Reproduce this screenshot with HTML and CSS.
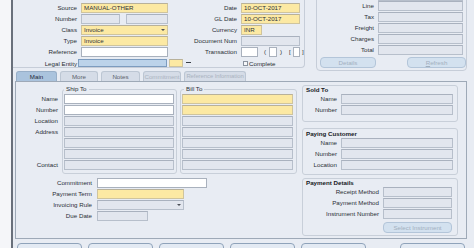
FILE: index.html
```html
<!DOCTYPE html>
<html>
<head>
<meta charset="utf-8">
<link rel="stylesheet" href="styles.css">
</head>
<body>
<div class="page">
  <div class="gutter"></div>
  <div class="window">
    <div class="top">
      <div class="trx">
        <div class="gtitle trx-title">Transaction</div>
        <div class="trx-body">
          <div class="colA">
            <div class="row"><span class="lbl la">Source</span><span class="f y wA">MANUAL-OTHER</span></div>
            <div class="row"><span class="lbl la">Number</span><span class="f wN1"></span><span class="f wN2"></span></div>
            <div class="row"><span class="lbl la">Class</span><span class="f y wA dd">Invoice<i class="arrow"></i></span></div>
            <div class="row"><span class="lbl la">Type</span><span class="f y wA">Invoice</span></div>
            <div class="row"><span class="lbl la">Reference</span><span class="f w wA"></span></div>
            <div class="row legal"><span class="lbl la lal">Legal Entity</span><span class="f b wLE"></span><span class="f y wLE2"></span><span class="lov"></span></div>
          </div>
          <div class="colB">
            <div class="row"><span class="lbl lb">Date</span><span class="f y wD">10-OCT-2017</span></div>
            <div class="row"><span class="lbl lb">GL Date</span><span class="f y wD">10-OCT-2017</span></div>
            <div class="row"><span class="lbl lb">Currency</span><span class="f y wC">INR</span></div>
            <div class="row"><span class="lbl lb">Document Num</span><span class="f wD"></span></div>
            <div class="row"><span class="lbl lb">Transaction</span><span class="f w wT1"></span><span class="par p1">(</span><span class="f w wT2"></span><span class="par p2">)</span><span class="par p3">[</span><span class="f w wT3"></span><span class="par p4">]</span></div>
            <div class="row chkrow"><span class="chk"></span><span class="chklbl">Complete</span></div>
          </div>
        </div>
      </div>
      <div class="bal">
        <div class="bal-title"><span class="gtitle">Balance Due</span><span class="f wB baltop"></span></div>
        <div class="row"><span class="lbl lc">Line</span><span class="f wB"></span></div>
        <div class="row"><span class="lbl lc">Tax</span><span class="f wB"></span></div>
        <div class="row"><span class="lbl lc">Freight</span><span class="f wB"></span></div>
        <div class="row"><span class="lbl lc">Charges</span><span class="f wB"></span></div>
        <div class="row"><span class="lbl lc">Total</span><span class="f wB"></span></div>
        <div class="balbtns"><span class="btn dis bDet">Details</span><span class="btn dis bRef"><u>R</u>efresh</span></div>
      </div>
    </div>
    <div class="tabs">
      <span class="tab sel t1">Main</span>
      <span class="tab t2">More</span>
      <span class="tab t3">Notes</span>
      <span class="tab dis t4">Commitment</span>
      <span class="tab dis t5">Reference Information</span>
    </div>
    <div class="panel">
      <div class="pleft">
        <div class="addr">
          <div class="addrLabels">
            <span class="lbl lr">Name</span>
            <span class="lbl lr">Number</span>
            <span class="lbl lr">Location</span>
            <span class="lbl lr">Address</span>
            <span class="lbl lr"></span>
            <span class="lbl lr"></span>
            <span class="lbl lr">Contact</span>
          </div>
          <fieldset class="fs ship">
            <legend>Ship To</legend>
            <span class="f w wS"></span>
            <span class="f w wS"></span>
            <span class="f wS"></span>
            <span class="f wS"></span>
            <span class="f wS"></span>
            <span class="f wS"></span>
            <span class="f wS"></span>
          </fieldset>
          <fieldset class="fs bill">
            <legend>Bill To</legend>
            <span class="f y wBi"></span>
            <span class="f y wBi"></span>
            <span class="f wBi"></span>
            <span class="f wBi"></span>
            <span class="f wBi"></span>
            <span class="f wBi"></span>
            <span class="f wBi"></span>
          </fieldset>
        </div>
        <div class="commit">
          <div class="row"><span class="lbl lm">Commitment</span><span class="f w wCm"></span></div>
          <div class="row"><span class="lbl lm">Payment Term</span><span class="f y wPt"></span></div>
          <div class="row"><span class="lbl lm">Invoicing Rule</span><span class="f wPt dd"><i class="arrow"></i></span></div>
          <div class="row"><span class="lbl lm">Due Date</span><span class="f wDd"></span></div>
        </div>
      </div>
      <div class="pright">
        <div class="grp sold">
          <div class="gt">Sold To</div>
          <div class="row"><span class="lbl ls">Name</span><span class="f wSo"></span></div>
          <div class="row"><span class="lbl ls">Number</span><span class="f wSo"></span></div>
        </div>
        <div class="grp paying">
          <div class="gt gt2">Paying Customer</div>
          <div class="row"><span class="lbl ls">Name</span><span class="f wSo"></span></div>
          <div class="row"><span class="lbl ls">Number</span><span class="f wSo"></span></div>
          <div class="row"><span class="lbl ls">Location</span><span class="f wSo"></span></div>
        </div>
        <div class="grp paydet">
          <div class="gt">Payment Details</div>
          <div class="row"><span class="lbl lp">Receipt Method</span><span class="f wPm"></span></div>
          <div class="row"><span class="lbl lp">Payment Method</span><span class="f wPm"></span></div>
          <div class="row"><span class="lbl lp">Instrument Number</span><span class="f wPm"></span></div>
          <div class="selrow"><span class="btn dis bSel">Select Instrument</span></div>
        </div>
      </div>
    </div>
    <div class="bbar">
      <span class="bb"></span><span class="bb"></span><span class="bb"></span><span class="bb"></span><span class="bb"></span><span class="bb last"></span>
    </div>
  </div>
</div>
</body>
</html>
```

FILE: styles.css
```css
* { box-sizing: border-box; }
html, body { margin: 0; padding: 0; }
body {
  width: 474px; height: 248px; overflow: hidden;
  background: #f5f6f9;
  font-family: "Liberation Sans", Arial, sans-serif;
  font-size: 6.2px;
  color: #262a30;
}
.page { display: flex; height: 248px; }
.gutter { width: 11px; flex: none; background: #f5f6f9; }
.window {
  width: 463px; flex: none;
  border-left: 2px solid #69707b;
  background: #e8ecf3;
  display: flex; flex-direction: column;
  overflow: hidden;
}
.top { display: flex; margin-top: -7px; height: 78px; flex: none; align-items: flex-start; }
.trx {
  width: 292px; height: 75px; flex: none;
  border-right: 1px solid #c6cdd8; border-bottom: 1px solid #c6cdd8;
  border-bottom-right-radius: 4px;
}
.gtitle { color: #2a2e35; white-space: nowrap; }
.trx-title { height: 10px; line-height: 9px; padding-left: 7px; }
.trx-body { display: flex; }
.colA { width: 178px; flex: none; }
.colB { flex: none; }
.row { display: flex; height: 11px; align-items: flex-start; white-space: nowrap; }
.lbl { display: block; height: 10px; line-height: 10px; text-align: right; flex: none; color: #2b2f36; white-space: nowrap; }
.la { width: 64px; margin-right: 4px; }
.lal { margin-right: 1px; }
.lb { width: 46px; margin-right: 4px; }
.lc { width: 57px; margin-right: 4px; }
.lr { width: 42px; height: 11px; line-height: 10px; }
.lm { width: 76px; margin-right: 5px; }
.ls { width: 34px; margin-right: 4px; }
.lp { width: 76px; margin-right: 4px; }

.f {
  display: block; flex: none; position: relative;
  height: 10px; line-height: 8px;
  padding: 0 2px;
  background: #e2e6ee;
  border: 1px solid #b7bfcb;
  border-top-color: #a9b1be;
  color: #2e3238;
  overflow: hidden; white-space: nowrap;
}
.f.w { background: #ffffff; border-color: #a9b1bd; }
.f.y { background: #fce9a3; border-color: #cfc49d; border-top-color: #b8b19a; }
.f.b { background: #bcd3ea; border-color: #7d9cbf; }
.wA { width: 87px; }
.wN1 { width: 39px; }
.wN2 { width: 42px; margin-left: 6px; }
.legal { padding-top: 1px; }
.legal .f { height: 8px; }
.wLE { width: 89px; }
.wLE2 { width: 14px; margin-left: 2px; }
.lov {
  display: block; width: 5px; height: 8px; margin-left: 3px; position: relative;
}
.lov::after { content: ""; position: absolute; left: 0; top: 3px; width: 5px; height: 1px; background: #3a3f47; }
.arrow {
  position: absolute; right: 2px; top: 3px;
  width: 0; height: 0;
  border-left: 2px solid transparent; border-right: 2px solid transparent;
  border-top: 2px solid #4a4f57;
}
.wD { width: 59px; }
.wC { width: 21px; }
.wT1 { width: 17px; }
.wT2 { width: 8px; }
.wT3 { width: 7px; }
.par { display: block; line-height: 10px; width: 2px; flex: none; color: #2b2f36; }
.p1 { margin-left: 6px; margin-right: 3px; }
.p2 { margin-left: 3px; }
.p3 { margin-left: 7px; margin-right: 2px; }
.p4 { margin-left: 2px; }
.chkrow { padding-left: 52px; align-items: center; height: 9px; margin-top: 1px; }
.chk { display: block; width: 5px; height: 5px; border: 1px solid #8b939f; background: #f7f8fa; flex: none; }
.chklbl { margin-left: 1px; line-height: 8px; }

.bal {
  width: 151px; height: 78px; margin-left: 11px; flex: none;
  border: 1px solid #c6cdd8; border-radius: 4px;
  padding: 0 3px 0 0;
}
.bal-title { display: flex; height: 7px; align-items: flex-end; }
.bal-title .gtitle { width: 61px; padding-left: 5px; line-height: 6px; flex: none; }
.wB { width: 85px; }
.baltop { height: 7px; }
.balbtns { display: flex; justify-content: space-between; margin-top: 1px; margin-right: -3px; padding-left: 3px; }
.btn {
  display: block; height: 11px; line-height: 9px; text-align: center;
  border: 1px solid #b3c5d9; border-radius: 4px;
  background: #d3e1ef; color: #a2afbe; flex: none; white-space: nowrap;
}
.btn u { text-decoration: underline; }
.bDet { width: 56px; }
.bRef { width: 59px; }

.tabs { display: flex; gap: 3px; height: 10px; padding-left: 3px; flex: none; }
.tab {
  display: block; height: 10px; line-height: 9px; text-align: center;
  border: 1px solid #bcc6d3; border-bottom: none; border-radius: 3px 3px 0 0;
  background: #d5dce7; color: #5a616b;
  white-space: nowrap; overflow: hidden; flex: none;
}
.tab.sel { background: #aac3dd; color: #1f2a38; border-color: #98afc8; }
.tab.dis { color: #aab3bf; }
.t1 { width: 41px; }
.t2 { width: 38px; }
.t3 { width: 39px; }
.t4 { width: 38px; }
.t5 { width: 62px; font-size: 5.9px; letter-spacing: -0.05px; }

.panel {
  width: 452px; height: 158px; margin-left: 2px; flex: none;
  border: 1px solid #9ea9b7;
  display: flex;
}
.pleft { width: 281px; flex: none; margin-right: 5px; }
.addr { display: flex; }
.addrLabels { width: 42px; padding-top: 12px; margin-right: 4px; flex: none; display: flex; flex-direction: column; }
.fs {
  margin: 3px 0 0 0; min-width: 0;
  border: 1px solid #c8cfd9; border-radius: 3px;
  display: flex; flex-direction: column; gap: 1px;
  padding: 1px 2px 3px 1px;
}
.fs legend { padding: 0 2px; margin-left: 0; line-height: 8px; height: 8px; color: #2b2f36; }
.ship { width: 115px; }
.bill { width: 117px; margin-left: 3px; padding-right: 3px; }
.bill legend { margin-left: 2px; }
.wS { width: 110px; }
.wBi { width: 111px; }
.commit { margin-top: 4px; }
.wCm { width: 110px; }
.wPt { width: 87px; }
.wDd { width: 51px; }

.pright { width: 156px; flex: none; }
.grp {
  border: 1px solid #c8cfd9; border-radius: 3px;
  padding: 0 4px 0 0;
}
.gt { font-weight: bold; color: #16191d; height: 8px; line-height: 8px; padding-left: 3px; white-space: nowrap; }
.gt2 { height: 9px; line-height: 10px; }
.sold { margin-top: 3px; padding-bottom: 5px; }
.paying { margin-top: 6px; padding-bottom: 3px; }
.paydet { margin-top: 3px; padding-bottom: 2px; }
.wSo { width: 112px; }
.wPm { width: 69px; }
.selrow { display: flex; padding-left: 80px; margin-top: 2px; }
.bSel { width: 69px; }

.bbar { display: flex; gap: 6px; padding-left: 4px; margin-top: 4px; flex: none; }
.bb {
  display: block; width: 65px; height: 12px; flex: none;
  border: 1px solid #8fa3ba; border-radius: 4px 4px 0 0;
  background: #e3eaf3;
}
.bb.last { margin-left: 28px; }
```
